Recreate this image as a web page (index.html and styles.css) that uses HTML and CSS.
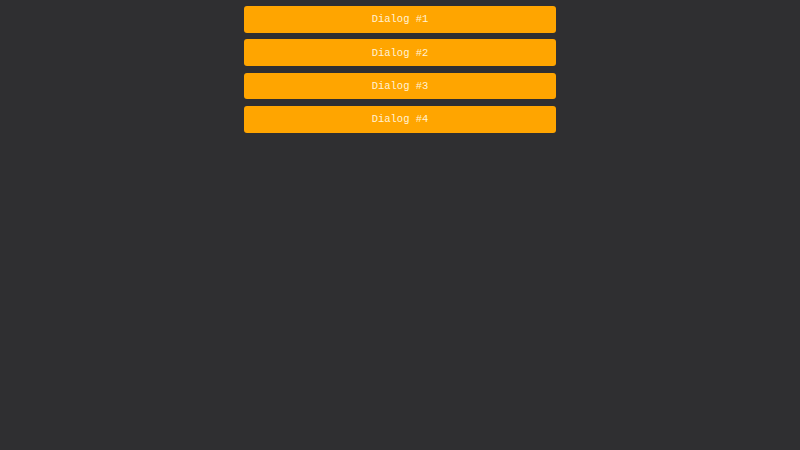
FILE: index.html
```html
<!DOCTYPE html>
<html>
<head>
<meta charset="utf-8">
<link rel="stylesheet" href="styles.css">
</head>
<body>
  <div class="dialog-list">
    <button class="dialog-btn">Dialog #1</button>
    <button class="dialog-btn">Dialog #2</button>
    <button class="dialog-btn">Dialog #3</button>
    <button class="dialog-btn">Dialog #4</button>
  </div>
</body>
</html>
```
FILE: styles.css
```css
html, body {
  margin: 0;
  height: 100%;
  background: #2f2f31;
}

.dialog-list {
  width: 312px;
  margin: 0 auto;
  padding-top: 6px;
  display: flex;
  flex-direction: column;
  gap: 6.67px;
}

.dialog-btn {
  height: 26.67px;
  border: none;
  border-radius: 3px;
  background: #ffa500;
  color: #fff2d6;
  font-family: "Liberation Mono", "DejaVu Sans Mono", monospace;
  font-size: 10.5px;
  padding: 0;
  cursor: pointer;
}
```
